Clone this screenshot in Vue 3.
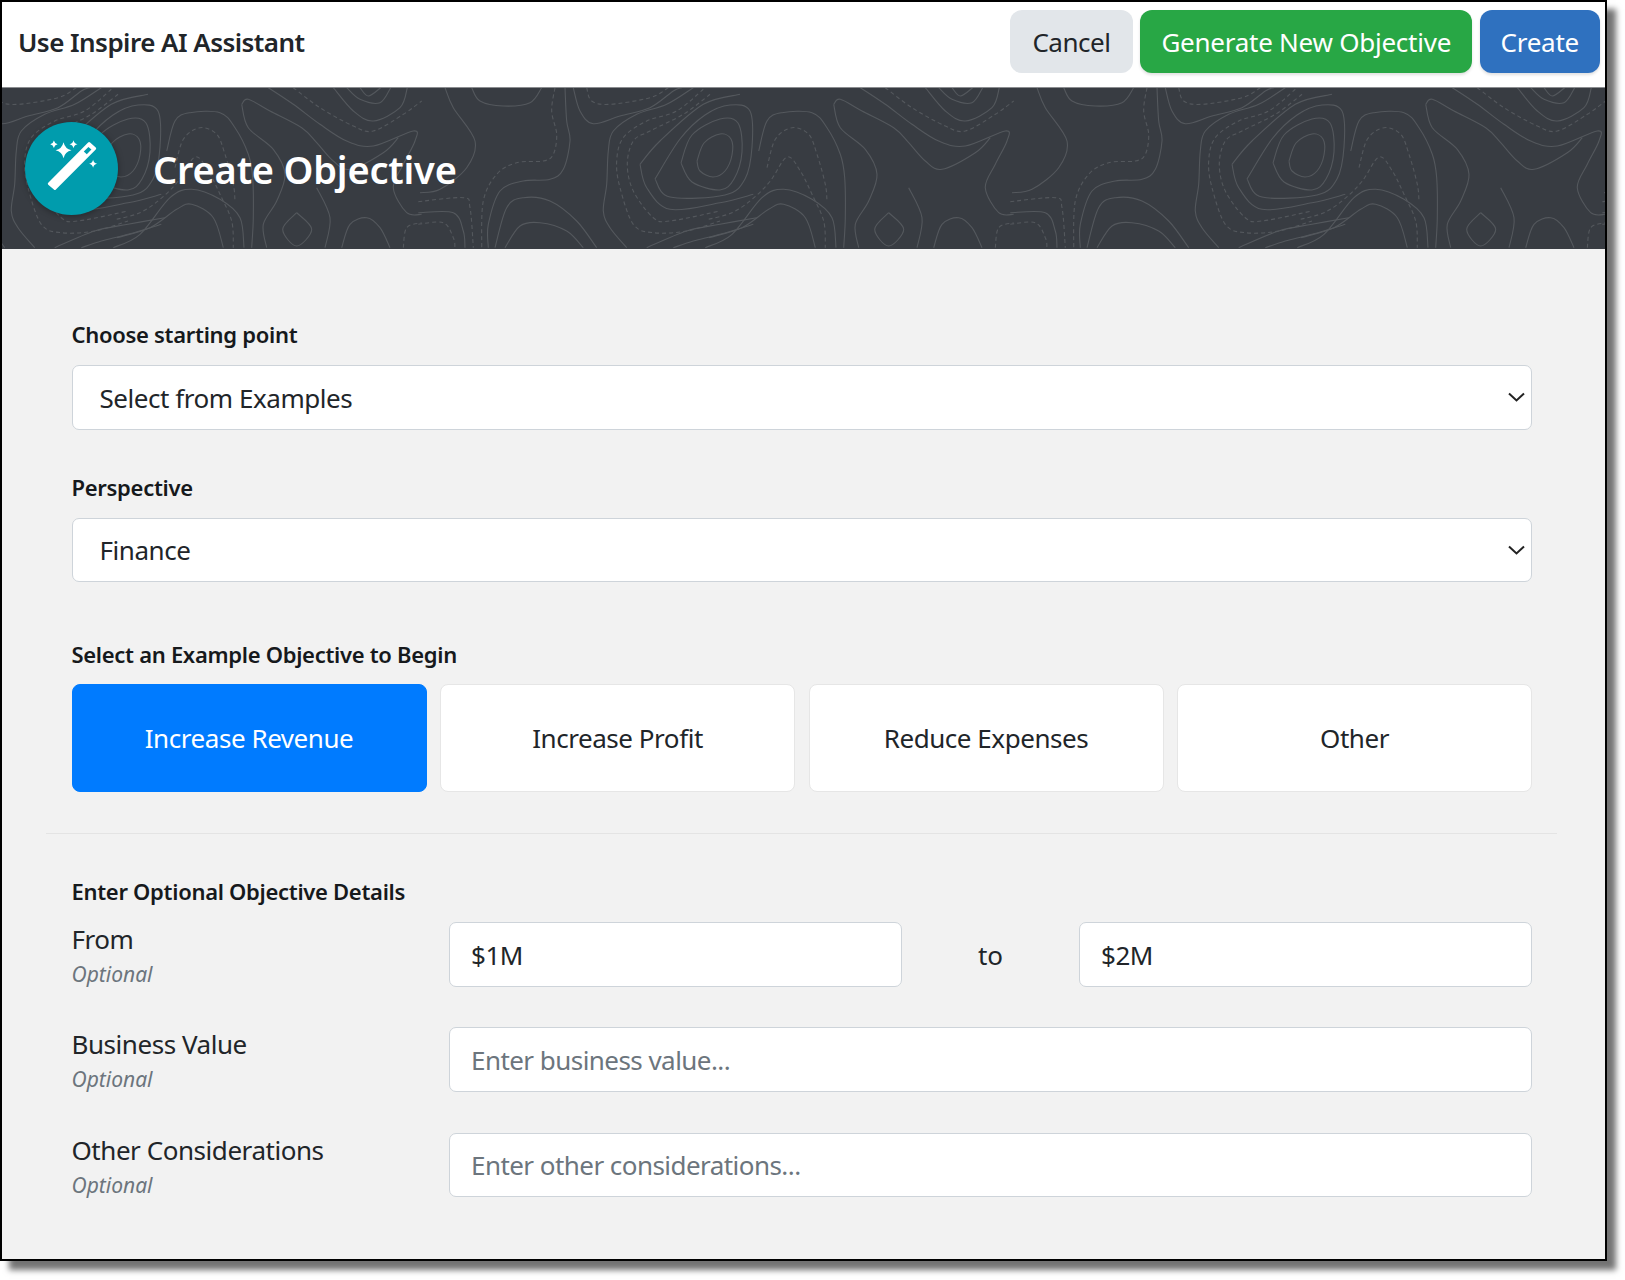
<script setup>
import { ref } from 'vue';

const examples = ['Increase Revenue', 'Increase Profit', 'Reduce Expenses', 'Other'];
const picked = ref('Increase Revenue');
const fromValue = ref('$1M');
const toValue = ref('$2M');

// contour lines of the banner, traced from the picture, in tile pixels
const z7 = (pts) => pts.map(([x, y]) => [x / 3, (y - 8) / 3]);
const z8 = (pts) => pts.map(([x, y]) => [300 + x / 3, (y - 8) / 3]);

const smooth = (p) => {
  let d = `M${p[0][0].toFixed(1)} ${p[0][1].toFixed(1)}`;
  for (let i = 0; i < p.length - 1; i++) {
    const a = p[i - 1] || p[i];
    const b = p[i];
    const c = p[i + 1];
    const e = p[i + 2] || c;
    const c1 = [b[0] + (c[0] - a[0]) / 6, b[1] + (c[1] - a[1]) / 6];
    const c2 = [c[0] - (e[0] - b[0]) / 6, c[1] - (e[1] - b[1]) / 6];
    d += `C${c1[0].toFixed(1)} ${c1[1].toFixed(1)} ${c2[0].toFixed(1)} ${c2[1].toFixed(1)} ${c[0].toFixed(1)} ${c[1].toFixed(1)}`;
  }
  return d;
};

const solidLines = [
  z7([[140, 200], [165, 110], [210, 85], [300, 85], [345, 130], [385, 210], [398, 280], [400, 400], [395, 490]]),
  z7([[-20, 490], [60, 450], [150, 340], [215, 315], [300, 345], [360, 400], [372, 490]]),
  z7([[-10, 460], [90, 430], [170, 375], [215, 360], [280, 400], [310, 490]]),
  z7([[365, 60], [385, 45], [450, 80], [545, 130], [590, 175], [640, 230], [690, 255], [790, 205], [835, 160]]),
  z7([[365, 60], [385, 130], [460, 195], [495, 270], [470, 350], [430, 420], [440, 490]]),
  z7([[590, 310], [630, 400], [615, 490]]),
  z7([[530, 385], [575, 435], [530, 485], [488, 435], [530, 385]]),
  z7([[445, 10], [520, 60], [600, 120], [680, 170], [760, 185], [880, 140], [885, 170], [850, 240], [820, 310], [860, 385], [905, 390]]),
  z7([[640, 10], [700, 80], [760, 110], [840, 70], [862, 10]]),
  z7([[680, 10], [720, 45], [780, 55], [812, 10]]),
  z7([[720, 10], [745, 35], [782, 10]]),
  z7([[665, 490], [690, 420], [740, 400], [780, 430], [810, 490]]),
  z8([[75, 10], [100, 70], [165, 170], [140, 250], [60, 315], [0, 325]]),
  z8([[155, 10], [180, 50], [250, 65], [330, 55], [365, 10]]),
  z8([[-5, 385], [100, 385], [130, 440], [135, 490]]),
  z8([[435, 10], [440, 110], [450, 170], [430, 255], [390, 285], [310, 290], [240, 320], [205, 420], [205, 490]]),
  z8([[225, 490], [260, 370], [310, 340], [390, 350], [470, 410], [530, 490]]),
  z8([[255, 490], [300, 425], [360, 415], [440, 440], [490, 490]]),
  z8([[460, 10], [480, 80], [520, 118], [600, 95], [690, 70], [760, 20], [785, 10]]),
  z8([[820, 10], [740, 60], [650, 90], [580, 140], [565, 200], [560, 300], [550, 380], [570, 430], [620, 490]]),
  z8([[660, 240], [680, 310], [750, 375], [900, 355], [1000, 330]]),
  z8([[680, 490], [800, 440], [900, 420], [1010, 400]]),
  z8([[760, 490], [820, 470], [900, 450], [1000, 420]]),
  z8([[660, 240], [720, 170], [850, 60], [960, 30]]),
  // rings of the hill that the tile repeats
  [[577, 74], [584, 56], [600, 47], [611, 52], [612, 68], [605, 84], [593, 90], [580, 84], [577, 74]],
  [[561, 76], [572, 48], [600, 32], [618, 36], [622, 65], [614, 92], [600, 103], [572, 95], [561, 76]],
  [[535, 92], [560, 52], [585, 28], [610, 18], [630, 24], [632, 60], [625, 92], [605, 108], [550, 110], [535, 92]]
];

const dashedLines = [
  z7([[165, 250], [190, 165], [240, 130], [290, 150], [315, 210], [340, 300], [345, 350]]),
  z7([[-10, 405], [60, 385], [120, 345], [175, 290], [225, 218], [265, 260], [300, 330], [335, 410], [340, 490]]),
  z7([[520, 10], [600, 70], [700, 125], [760, 140], [850, 90], [905, 50]]),
  z7([[850, 490], [860, 430], [905, 415]]),
  z8([[-5, 352], [130, 340], [150, 370], [160, 490]]),
  z8([[-5, 420], [70, 415], [100, 460], [105, 490]]),
  z8([[405, 10], [395, 80], [410, 150], [400, 210], [370, 230], [290, 235], [230, 270], [190, 350], [185, 490]]),
  z8([[500, 10], [515, 50], [570, 60], [690, 40], [745, 10]]),
  z8([[850, 15], [770, 80], [680, 110], [610, 160], [590, 230], [600, 310], [640, 420], [700, 445], [800, 440], [900, 410]]),
  z8([[870, 30], [790, 90], [690, 140], [640, 170], [622, 240], [640, 320], [700, 400], [750, 410], [900, 380]])
];

const solidPaths = solidLines.map(smooth);
const dashedPaths = dashedLines.map(smooth);
const tileOffsets = [-474, 118, 710, 1302];

const star = (x, y, r) => {
  const k = r * 0.18;
  return `M${x} ${y - r}Q${x + k} ${y - k} ${x + r} ${y}Q${x + k} ${y + k} ${x} ${y + r}Q${x - k} ${y + k} ${x - r} ${y}Q${x - k} ${y - k} ${x} ${y - r}Z`;
};
const stars = [star(131, 120, 24), star(102, 102, 11), star(161, 102, 12), star(220, 161, 12)];
</script>

<template>
  <div class="page">
    <div class="frame">
      <header class="topbar">
        <div class="topbar-title">Use Inspire AI Assistant</div>
        <div class="topbar-actions">
          <button class="btn btn-cancel">Cancel</button>
          <button class="btn btn-generate">Generate New Objective</button>
          <button class="btn btn-create">Create</button>
        </div>
      </header>

      <section class="banner">
        <svg class="contours" width="1603" height="162" fill="none" aria-hidden="true">
          <g v-for="x in tileOffsets" :key="x" :transform="`translate(${x} 0)`">
            <path v-for="d in solidPaths" :key="d" :d="d" stroke="#54585d" stroke-width="1.1" />
            <path v-for="d in dashedPaths" :key="d" :d="d" stroke="#54585d" stroke-width="1.1" stroke-dasharray="4 3" />
          </g>
        </svg>
        <div class="badge">
          <svg viewBox="15 35 280 280" width="93" height="93">
            <path d="M85 218 205 97Q208 94 211 97L228 112Q231 115 228 118L108 238Q105 241 102 238L85 224Q82 221 85 218Z" fill="#fff" />
            <path d="M192 124 206 110 215 118 201 132Z" fill="#009cad" />
            <path v-for="d in stars" :key="d" :d="d" fill="#fff" />
          </svg>
        </div>
        <h1 class="banner-title">Create Objective</h1>
      </section>

      <main class="content">
        <div class="block">
          <label class="section-label">Choose starting point</label>
          <div class="select-wrap">
            <select class="field select">
              <option>Select from Examples</option>
            </select>
            <svg class="chevron" viewBox="0 0 17 10" width="17" height="10" fill="none">
              <path d="M1 1.5 8.5 8.5 16 1.5" stroke="#222" stroke-width="2" />
            </svg>
          </div>
        </div>

        <div class="block block-second">
          <label class="section-label">Perspective</label>
          <div class="select-wrap">
            <select class="field select">
              <option>Finance</option>
            </select>
            <svg class="chevron" viewBox="0 0 17 10" width="17" height="10" fill="none">
              <path d="M1 1.5 8.5 8.5 16 1.5" stroke="#222" stroke-width="2" />
            </svg>
          </div>
        </div>

        <div class="block block-third">
          <label class="section-label tight">Select an Example Objective to Begin</label>
          <div class="example-grid">
            <button
              v-for="item in examples"
              :key="item"
              class="example-card"
              :class="{ active: picked === item }"
              @click="picked = item"
            >
              {{ item }}
            </button>
          </div>
        </div>

        <hr class="divider" />

        <div class="block">
          <label class="section-label">Enter Optional Objective Details</label>
          <div class="detail-row">
            <div class="detail-label">
              <div class="detail-name">From</div>
              <div class="detail-hint">Optional</div>
            </div>
            <div class="detail-fields">
              <input v-model="fromValue" class="field" type="text" />
              <span class="to">to</span>
              <input v-model="toValue" class="field" type="text" />
            </div>
          </div>
          <div class="detail-row">
            <div class="detail-label">
              <div class="detail-name">Business Value</div>
              <div class="detail-hint">Optional</div>
            </div>
            <div class="detail-fields">
              <input class="field" type="text" placeholder="Enter business value..." />
            </div>
          </div>
          <div class="detail-row">
            <div class="detail-label">
              <div class="detail-name">Other Considerations</div>
              <div class="detail-hint">Optional</div>
            </div>
            <div class="detail-fields">
              <input class="field" type="text" placeholder="Enter other considerations..." />
            </div>
          </div>
        </div>
      </main>
    </div>
  </div>
</template>

<style>
body {
  background: #fff;
}
</style>

<style scoped>
.page {
  height: 1280px;
  overflow: hidden;
}

.frame {
  box-sizing: border-box;
  width: 1607px;
  height: 1261px;
  border: 2px solid #000;
  background: #f2f2f2;
  box-shadow: 9px 9px 6px rgba(0, 0, 0, 0.55);
  font-family: "Noto Sans", "Open Sans", sans-serif;
  color: #212529;
}

.topbar {
  height: 85px;
  box-sizing: border-box;
  padding: 8px 5px 0 16px;
  background: #fff;
  display: flex;
  justify-content: space-between;
  align-items: flex-start;
}

.topbar-title {
  font-size: 26px;
  font-weight: 600;
  letter-spacing: -0.55px;
  line-height: 65px;
  height: 63px;
}

.topbar-actions {
  display: flex;
  gap: 7.5px;
}

.btn {
  height: 63px;
  border: none;
  border-radius: 12px;
  padding: 0 21px;
  font: inherit;
  font-size: 26px;
  letter-spacing: -0.25px;
  cursor: pointer;
  box-shadow: 0 2px 3px rgba(0, 0, 0, 0.12);
}

.btn-cancel {
  background: #e2e6ea;
  color: #212529;
  box-shadow: none;
  padding: 0 22.5px;
  letter-spacing: -0.5px;
}

.btn-generate {
  background: #28a745;
  color: #fff;
}

.btn-create {
  background: #2f71bf;
  color: #fff;
}

.banner {
  position: relative;
  height: 162px;
  box-sizing: border-box;
  padding-left: 23px;
  background: #383c42;
  border-top: 1px solid #8b8d90;
  display: flex;
  align-items: center;
  gap: 35px;
  overflow: hidden;
}

.contours {
  position: absolute;
  top: -1px;
  left: 0;
}

.badge {
  position: relative;
  width: 93px;
  height: 93px;
  border-radius: 50%;
  background: #009cad;
  box-shadow: 0 1px 6px rgba(0, 0, 0, 0.35);
}

.badge svg {
  display: block;
}

.banner-title {
  position: relative;
  margin: 0;
  color: #fff;
  font-size: 38px;
  font-weight: 600;
  letter-spacing: -0.2px;
}

.content {
  padding: 71px 48px 0 44px;
}

.block {
  padding: 0 25px 0 25.5px;
}

.block-second {
  margin-top: 43px;
}

.block-third {
  margin-top: 58px;
}

.section-label {
  display: block;
  height: 28px;
  line-height: 28px;
  margin-bottom: 17px;
  font-size: 22px;
  font-weight: 600;
  letter-spacing: -0.3px;
  color: #16191c;
}

.section-label.tight {
  margin-bottom: 16px;
}

.select-wrap {
  position: relative;
}

.field {
  display: block;
  box-sizing: border-box;
  width: 100%;
  height: 64.5px;
  padding: 1px 21px 0;
  border: 1px solid #ced4da;
  border-radius: 7px;
  background: #fff;
  font: inherit;
  font-size: 26px;
  letter-spacing: -0.45px;
  color: #212529;
  outline: none;
}

.field::placeholder {
  color: #6c757d;
  letter-spacing: -0.55px;
}

.select {
  appearance: none;
  padding-left: 27px;
}

.chevron {
  position: absolute;
  top: 27px;
  right: 7px;
}

.example-grid {
  display: grid;
  grid-template-columns: repeat(4, 1fr);
  gap: 13.5px;
}

.example-card {
  height: 108px;
  border: 1px solid #e6e6e6;
  border-radius: 8px;
  background: #fff;
  font: inherit;
  font-size: 26px;
  letter-spacing: -0.45px;
  color: #212529;
  cursor: pointer;
}

.example-card.active {
  background: #007bff;
  border-color: #007bff;
  color: #fff;
}

.divider {
  height: 1px;
  margin: 41px 0 43px;
  border: none;
  background: #e4e4e4;
}

.detail-row {
  display: flex;
  margin-bottom: 39.3px;
}

.detail-label {
  flex: 0 0 377.5px;
}

.detail-name {
  margin-top: -1px;
  font-size: 26px;
  line-height: 36px;
  letter-spacing: -0.45px;
}

.detail-hint {
  margin-top: 3px;
  font-size: 21px;
  line-height: 28px;
  font-style: italic;
  color: #6c757d;
}

.detail-fields {
  flex: 1;
  display: flex;
  align-items: flex-start;
}

.detail-fields .field {
  flex: 1;
  min-width: 0;
}

.to {
  flex: 0 0 177px;
  align-self: center;
  text-align: center;
  font-size: 26px;
}
</style>
